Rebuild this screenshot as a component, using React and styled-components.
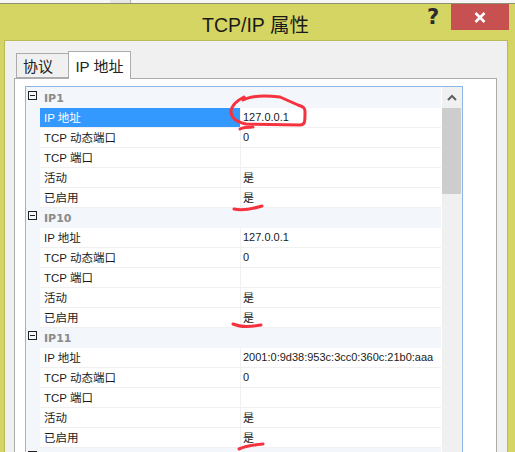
import React from "react";
import styled, { createGlobalStyle } from "styled-components";

const Global = createGlobalStyle`
  html, body { margin: 0; padding: 0; background: #fff; }
  #root { width: 515px; height: 452px; overflow: hidden; }
`;

const FONT = `"Liberation Sans", "Noto Sans CJK SC", sans-serif`;

const Screen = styled.div`
  position: relative;
  width: 515px;
  height: 452px;
  overflow: hidden;
  background: #fff;
  font-family: ${FONT};
  color: #1a1a1a;
`;
const TopStrip = styled.div`
  height: 3px;
  background: #f6f6f6;
  display: flex;
`;
const StripTab = styled.div`
  width: 20px;
  margin-left: 110px;
  background: #e6e6e6;
  border-right: 1px solid #b0b0b0;
`;
const Window = styled.div`
  height: 449px;
  box-sizing: border-box;
  border-top: 1px solid #8f8f70;
  background: #d5d563;
  display: flex;
  flex-direction: column;
`;
const TitleBar = styled.div`
  position: relative;
  height: 36px;
  flex-shrink: 0;
  display: flex;
  align-items: center;
  justify-content: center;
  font-size: 19.5px;
  padding: 3px 4px 0 0;
  box-sizing: border-box;
`;
const HelpMark = styled.span`
  position: absolute;
  left: 427px;
  top: 1px;
  font: bold 21px "DejaVu Sans", sans-serif;
  color: #2b2b2b;
`;
const Close = styled.div`
  position: absolute;
  left: 451px;
  top: 0;
  width: 58px;
  height: 26px;
  background: #c75050;
  display: flex;
  align-items: center;
  justify-content: center;
`;
const Client = styled.div`
  margin: 0 7px 0 4px;
  flex: 1;
  min-height: 0;
  border: 1px solid #b9b95a;
  border-bottom: none;
  background: #f0f0f0;
  padding: 10px 10px 0 9px;
  display: flex;
  flex-direction: column;
`;
const Tabs = styled.div`
  display: flex;
  align-items: flex-end;
  height: 27px;
  flex-shrink: 0;
  padding-left: 2px;
  position: relative;
  z-index: 1;
`;
const Tab = styled.div`
  box-sizing: border-box;
  height: ${(p) => (p.$active ? "28px" : "25px")};
  margin-bottom: ${(p) => (p.$active ? "-1px" : "0")};
  width: ${(p) => (p.$active ? "63px" : "52px")};
  border: 1px solid #acacac;
  border-bottom: ${(p) => (p.$active ? "none" : "1px solid #acacac")};
  border-right: ${(p) => (p.$active ? "1px solid #acacac" : "none")};
  background: ${(p) => (p.$active ? "#fff" : "#f0f0f0")};
  padding-right: ${(p) => (p.$active ? "0" : "9px")};
  display: flex;
  align-items: center;
  justify-content: center;
  font-size: 15px;
  color: #222;
`;
const TabPanel = styled.div`
  flex: 1;
  min-height: 0;
  background: #fff;
  border: 1px solid #acacac;
  border-bottom: none;
  padding: 7px 33px 0 10px;
  display: flex;
`;
const Grid = styled.div`
  flex: 1;
  border: 1px solid #8cb6e6;
  border-bottom: none;
  display: flex;
  overflow: hidden;
`;
const Rows = styled.div`
  width: 415px;
  flex-shrink: 0;
  display: flex;
  flex-direction: column;
`;
const Group = styled.div`
  height: ${(p) => p.$h || 20}px;
  background: #f3f6fb;
  display: flex;
  align-items: center;
  flex-shrink: 0;
`;
const Toggle = styled.span`
  box-sizing: border-box;
  width: 9px;
  height: 9px;
  border: 1px solid #222;
  margin: -5px 7px 0 2px;
  position: relative;
  &::after {
    content: "";
    position: absolute;
    left: 1px;
    right: 1px;
    top: 3px;
    height: 1px;
    background: #222;
  }
`;
const GroupName = styled.span`
  font: bold 11px "DejaVu Sans", sans-serif;
  color: #8a8a8a;
  padding-top: 1px;
`;
const Row = styled.div`
  display: flex;
  height: 20px;
  flex-shrink: 0;
  background: #f3f6fb;
`;
const NameCell = styled.div`
  width: 200px;
  margin-left: 14px;
  padding: 0 0 2px 4px;
  box-sizing: border-box;
  font-size: 11.5px;
  background: ${(p) => (p.$sel ? "#3399ff" : "#fff")};
  color: ${(p) => (p.$sel ? "#fff" : "#1a1a1a")};
  border-bottom: 1px solid #f0f0f0;
  display: flex;
  align-items: center;
`;
const ValueCell = styled.div`
  flex: 1;
  background: #fff;
  font-size: 11px;
  border-left: 1px solid #f0f0f0;
  border-bottom: 1px solid #f0f0f0;
  padding: 0 0 2px 2px;
  display: flex;
  align-items: center;
  white-space: nowrap;
`;
const Scrollbar = styled.div`
  width: 19px;
  margin-left: 1px;
  background: #f0f0f0;
  display: flex;
  flex-direction: column;
  flex: 1;
`;
const ScrollUp = styled.div`
  height: 21px;
  display: flex;
  align-items: center;
  justify-content: center;
`;
const Thumb = styled.div`
  height: 86px;
  margin-right: 1px;
  background: #cdcdcd;
`;
const Ink = styled.svg`
  position: absolute;
  left: 0;
  top: 0;
  pointer-events: none;
`;

const groups = [
  { name: "IP1", ip: "127.0.0.1", sel: true, h: 21 },
  { name: "IP10", ip: "127.0.0.1" },
  { name: "IP11", ip: "2001:0:9d38:953c:3cc0:360c:21b0:aaa" },
];

export default function App() {
  return (
    <Screen>
      <Global />
      <TopStrip>
        <StripTab />
      </TopStrip>
      <Window>
        <TitleBar>
          TCP/IP 属性
          <HelpMark>?</HelpMark>
          <Close>
            <svg width="12" height="11" viewBox="0 0 12 11">
              <path d="M1.5 1 L10.5 10 M10.5 1 L1.5 10" stroke="#fff" strokeWidth="2.6" />
            </svg>
          </Close>
        </TitleBar>
        <Client>
          <Tabs>
            <Tab>协议</Tab>
            <Tab $active>IP 地址</Tab>
          </Tabs>
          <TabPanel>
            <Grid>
              <Rows>
                {groups.map((g) => (
                  <React.Fragment key={g.name}>
                    <Group $h={g.h}>
                      <Toggle />
                      <GroupName>{g.name}</GroupName>
                    </Group>
                    <Row>
                      <NameCell $sel={g.sel}>IP 地址</NameCell>
                      <ValueCell>{g.ip}</ValueCell>
                    </Row>
                    <Row>
                      <NameCell>TCP 动态端口</NameCell>
                      <ValueCell>0</ValueCell>
                    </Row>
                    <Row>
                      <NameCell>TCP 端口</NameCell>
                      <ValueCell />
                    </Row>
                    <Row>
                      <NameCell>活动</NameCell>
                      <ValueCell>是</ValueCell>
                    </Row>
                    <Row>
                      <NameCell>已启用</NameCell>
                      <ValueCell>是</ValueCell>
                    </Row>
                  </React.Fragment>
                ))}
                <Group>
                  <Toggle />
                </Group>
              </Rows>
              <Scrollbar>
                <ScrollUp>
                  <svg width="10" height="7" viewBox="0 0 10 7">
                    <path d="M1 6 L5 2 L9 6" fill="none" stroke="#606060" strokeWidth="2" />
                  </svg>
                </ScrollUp>
                <Thumb />
              </Scrollbar>
            </Grid>
          </TabPanel>
        </Client>
      </Window>
      <Ink width="515" height="452" viewBox="0 0 515 452">
        <g fill="none" stroke="#f5333f" strokeWidth="3" strokeLinecap="round" strokeLinejoin="round">
          <path d="M244 97 C238 100 232 105 231 111 C231 118 236 122 246 124 L300 125 C305 125 305 122 305 112 C305 108 304 107 298 105 L280 97 C262 95 250 96 243 100" />
          <path d="M240 129 C244 127 248 127 253 127" />
          <path d="M234 209 C242 211 252 209 262 206" />
          <path d="M233 324 C240 327 250 327 261 325" />
          <path d="M239 449 C246 446 253 445 263 444" />
        </g>
      </Ink>
    </Screen>
  );
}
